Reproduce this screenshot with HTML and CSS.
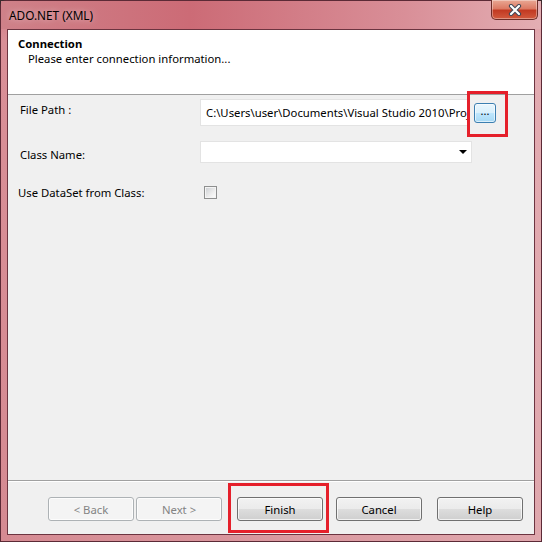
FILE: index.html
```html
<!DOCTYPE html>
<html lang="en">
<head>
    <meta charset="UTF-8">
    <title>ADO.NET (XML)</title>
    <link rel="stylesheet" href="styles.css">
</head>
<body>
    <div class="window">
        <div class="titlebar">
            <span class="title">ADO.NET (XML)</span>
            <button class="close" aria-label="Close">
                <svg width="14" height="12" viewBox="0 0 14 12">
                    <path d="M3 2 L11 10 M11 2 L3 10" stroke="#404858" stroke-width="4.2" stroke-linecap="round"/>
                    <path d="M3 2 L11 10 M11 2 L3 10" stroke="#ffffff" stroke-width="2.2" stroke-linecap="round"/>
                </svg>
            </button>
        </div>
        <div class="client">
            <div class="header">
                <div class="header-title">Connection</div>
                <div class="header-sub">Please enter connection information...</div>
            </div>
            <div class="body">
                <div class="row row-path">
                    <label class="label" for="path">File Path :</label>
                    <div class="control">
                        <div class="textbox" id="path">C:\Users\user\Documents\Visual Studio 2010\Projects\Report\Data.xml</div>
                        <div class="marked">
                            <button class="browse">...</button>
                            <span class="mark mark-browse"></span>
                        </div>
                    </div>
                </div>
                <div class="row row-class">
                    <label class="label">Class Name:</label>
                    <div class="combo">
                        <span class="arrow"></span>
                    </div>
                </div>
                <div class="row row-check">
                    <label class="label label-check">Use DataSet from Class:</label>
                    <span class="checkbox"></span>
                </div>
            </div>
            <div class="footer">
                <button class="btn" disabled>&lt; Back</button>
                <button class="btn btn-next" disabled>Next &gt;</button>
                <div class="marked">
                    <button class="btn">Finish</button>
                    <span class="mark mark-finish"></span>
                </div>
                <button class="btn btn-cancel">Cancel</button>
                <button class="btn btn-help">Help</button>
            </div>
        </div>
    </div>
</body>
</html>
```

FILE: styles.css
```css
body {
    margin: 0;
    width: 542px;
    height: 542px;
    overflow: hidden;
    background: #3a2a2c;
    font-family: 'Noto Sans', 'Open Sans', sans-serif;
    font-size: 11.3px;
    color: #000;
}
.window {
    box-sizing: border-box;
    width: 542px;
    height: 542px;
    display: flex;
    flex-direction: column;
    padding: 0 6px 6px 6px;
    border: 1px solid #5c2a36;
    border-radius: 6px 6px 0 0;
    background:
        linear-gradient(90deg, rgba(255,255,255,0) 0%, rgba(255,255,255,0.12) 50%, rgba(255,255,255,0.25) 100%),
        linear-gradient(180deg, #cf7881 0%, #d98f97 40px, #d58a92 100%);
}
.titlebar {
    height: 28px;
    display: flex;
    justify-content: space-between;
    align-items: flex-start;
    background: linear-gradient(90deg, #cf8189 0%, #cc6b76 35%, #d98f98 75%, #e3aeb3 100%);
    margin: 0 -6px;
    padding: 0 3px 0 8px;
}
.title {
    line-height: 28px;
    font-size: 11.8px;
    color: #000;
    text-shadow: 0 0 6px rgba(255,255,255,0.6);
}
.close {
    width: 47px;
    height: 20px;
    margin-top: -1px;
    padding: 0;
    display: flex;
    align-items: center;
    justify-content: center;
    border: 1px solid #6e2d28;
    border-top: none;
    border-radius: 0 0 5px 5px;
    background: linear-gradient(180deg, #e9a894 0%, #dc7a64 45%, #c23a22 55%, #d25a3e 100%);
    box-shadow: inset 0 0 0 1px rgba(255,255,255,0.35);
}
.client {
    flex: 1;
    display: flex;
    flex-direction: column;
    border: 1px solid #6c3440;
    background: #f0f0f0;
}
.header {
    height: 65px;
    background: #fff;
    border-bottom: 1px solid #a0a0a0;
    padding: 6px 0 0 10px;
    box-sizing: border-box;
}
.header-title {
    font-weight: bold;
    line-height: 15px;
}
.header-sub {
    padding-left: 10px;
    line-height: 15px;
}
.body {
    flex: 1;
    padding: 4px 0 0 12px;
    border-bottom: 1px solid #a0a0a0;
    box-shadow: 0 1px 0 #fff;
}
.row {
    display: flex;
    align-items: center;
}
.label {
    width: 180px;
    flex: none;
}
.row-path {
    align-items: flex-start;
}
.row-path .label {
    padding-top: 3px;
}
.control {
    display: flex;
    align-items: center;
    gap: 6px;
}
.textbox {
    box-sizing: border-box;
    width: 268px;
    height: 27px;
    line-height: 25px;
    padding: 0 5px;
    background: #fff;
    border: 1px solid #e3e3e3;
    white-space: nowrap;
    overflow: hidden;
}
.marked {
    position: relative;
    display: flex;
}
.mark {
    position: absolute;
    border: 3px solid #e5202b;
    pointer-events: none;
}
.mark-browse {
    left: -7px;
    right: -12px;
    top: -12px;
    bottom: -14px;
}
.mark-finish {
    left: -9px;
    right: -6px;
    top: -14px;
    bottom: -12px;
}
.browse {
    width: 22px;
    height: 20px;
    padding: 0 0 3px;
    font-family: inherit;
    font-size: 11px;
    line-height: 12px;
    border: 1px solid #3c7fb1;
    border-radius: 3px;
    background: linear-gradient(180deg, #eaf6fd 0%, #d9f0fc 50%, #bee6fd 51%, #a7d9f5 100%);
    box-shadow: inset 0 0 0 1px rgba(255,255,255,0.6);
}
.row-class {
    margin-top: 15px;
}
.row-class .label {
    padding-top: 4px;
}
.combo {
    position: relative;
    box-sizing: border-box;
    width: 272px;
    height: 22px;
    background: #fff;
    border: 1px solid #e3e3e3;
}
.arrow {
    position: absolute;
    right: 4px;
    top: 8px;
    border-left: 4px solid transparent;
    border-right: 4px solid transparent;
    border-top: 4px solid #000;
}
.row-check {
    margin-top: 22px;
}
.label-check {
    margin-left: -2px;
    width: 186px;
}
.checkbox {
    box-sizing: border-box;
    width: 13px;
    height: 13px;
    border: 1px solid #8e8f8f;
    background: linear-gradient(135deg, #c9ccd0 0%, #eeeeee 60%, #fff 100%);
    box-shadow: inset 0 0 0 1px #f4f4f4;
}
.footer {
    height: 53px;
    display: flex;
    align-items: flex-start;
    padding: 16px 0 0 40px;
    box-sizing: border-box;
}
.btn {
    width: 86px;
    height: 24px;
    padding: 0;
    font-family: inherit;
    font-size: 11.3px;
    color: #000;
    border: 1px solid #707070;
    border-radius: 3px;
    background: linear-gradient(180deg, #f2f2f2 0%, #ebebeb 50%, #dddddd 51%, #cfcfcf 100%);
    box-shadow: inset 0 0 0 1px rgba(255,255,255,0.7);
}
.btn:disabled {
    color: #838383;
    border-color: #adb2b5;
    background: #f4f4f4;
}
.btn-next {
    margin-left: 2px;
    margin-right: 15px;
}
.btn-cancel {
    margin-left: 13px;
}
.btn-help {
    margin-left: 15px;
}
```
